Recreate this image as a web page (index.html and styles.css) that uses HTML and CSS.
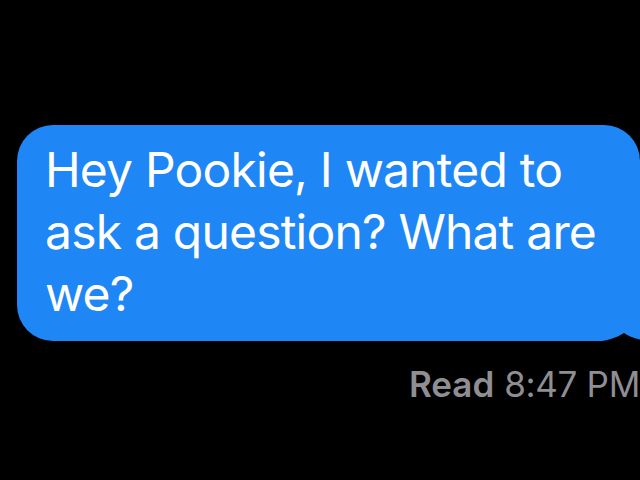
FILE: index.html
```html
<!DOCTYPE html>
<html>
<head>
<meta charset="utf-8">
<link rel="stylesheet" href="styles.css">
</head>
<body>
<main class="thread">
  <div class="bubble">
    <p class="bubble-text">Hey Pookie, I wanted to<br>ask a question? What are<br>we?</p>
    <svg class="notch" width="44" height="16" viewBox="0 0 44 16" aria-hidden="true">
      <path d="M0,16 L0,15.5 C10,15.3 20,12 28,7 C32,10 37,12 44,13.5 L44,16 Z" fill="#000"/>
    </svg>
  </div>
  <div class="receipt"><span class="receipt-label">Read</span> <span class="receipt-time">8:47 PM</span></div>
</main>
</body>
</html>
```
FILE: styles.css
```css
html, body {
  margin: 0;
  padding: 0;
  background: #000;
  width: 640px;
  height: 480px;
  overflow: hidden;
}
.thread {
  display: flex;
  flex-direction: column;
  padding: 125px 0 0 17px;
  font-family: Inter, "Liberation Sans", sans-serif;
}
.bubble {
  position: relative;
  background: #1f86f6;
  border-radius: 36px 36px 0 36px;
  height: 216px;
  box-sizing: border-box;
  padding: 14px 0 0 28px;
}
.bubble-text {
  margin: 0;
  color: #fff;
  font-size: 48px;
  line-height: 62px;
  letter-spacing: -0.8px;
  white-space: nowrap;
}
.notch {
  position: absolute;
  right: 0;
  bottom: -1px;
}
.receipt {
  align-self: flex-end;
  margin-top: 22px;
  margin-right: 0;
  color: #8e8e93;
  font-size: 35px;
  line-height: 42px;
  white-space: nowrap;
}
.receipt-label {
  font-weight: 600;
}
.receipt-time {
  letter-spacing: -0.3px;
}
```
